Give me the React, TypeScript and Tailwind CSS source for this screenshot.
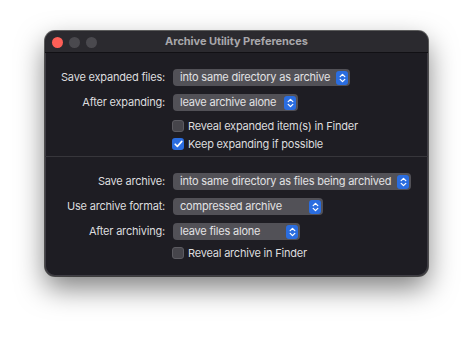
import type { ReactNode } from "react";

const FONT = { fontFamily: "Inter, 'Noto Sans', 'Liberation Sans', sans-serif" };

function Stepper() {
  return (
    <span className="ml-auto mr-[2px] flex h-[14px] w-[12px] items-center justify-center rounded-[3px] bg-[#2a6de0]">
      <svg width="7" height="10" viewBox="0 0 7 10" fill="none">
        <path d="M1.2 3.6 3.5 1.4 5.8 3.6" stroke="#fff" strokeWidth="1.3" strokeLinecap="round" strokeLinejoin="round" />
        <path d="M1.2 6.4 3.5 8.6 5.8 6.4" stroke="#fff" strokeWidth="1.3" strokeLinecap="round" strokeLinejoin="round" />
      </svg>
    </span>
  );
}

function Popup({ label, value, width }: { label: string; value: string; width: string }) {
  return (
    <div className="flex h-[17px] items-center">
      <div className="w-[121px] pr-[1px] text-right text-[#dcdcde]">{label}</div>
      <div className={`ml-[7px] flex h-[17px] items-center rounded-[4px] bg-[#525157] pl-[7px] text-[#e2e2e4] ${width}`}>
        <span className="whitespace-nowrap">{value}</span>
        <Stepper />
      </div>
    </div>
  );
}

function Check({ checked, children }: { checked?: boolean; children: ReactNode }) {
  return (
    <div className="flex h-[18px] items-center pl-[127px]">
      {checked ? (
        <span className="flex h-[12px] w-[12px] items-center justify-center rounded-[3px] bg-[#2a6de0]">
          <svg width="9" height="8" viewBox="0 0 9 8" fill="none">
            <path d="M1.2 4.2 3.4 6.4 7.8 1.4" stroke="#fff" strokeWidth="1.6" strokeLinecap="round" strokeLinejoin="round" />
          </svg>
        </span>
      ) : (
        <span className="h-[12px] w-[12px] rounded-[3px] border border-[#5c5b61] bg-[#46454b]" />
      )}
      <span className="ml-[4px] whitespace-nowrap text-[#dcdcde]">{children}</span>
    </div>
  );
}

export default function App() {
  return (
    <div className="h-[338px] w-[474px] overflow-hidden bg-white pl-[45px] pt-[31px]" style={FONT}>
      <div className="flex h-[245px] w-[383px] flex-col overflow-hidden rounded-[10px] bg-[#1e1d23] text-[11px] tracking-[-0.2px] shadow-[0_12px_28px_rgba(0,0,0,0.5),0_0_0_1px_rgba(0,0,0,0.6)] ring-1 ring-inset ring-[#55545a]/60">
        <header className="relative flex h-[22px] shrink-0 items-center justify-center border-b border-[#111014] bg-[#2b2a2f]">
          <div className="absolute left-[7px] top-[6px] flex gap-[6px]">
            <span className="h-[11px] w-[11px] rounded-full bg-[#fe5f57]" />
            <span className="h-[11px] w-[11px] rounded-full bg-[#4a494e]" />
            <span className="h-[11px] w-[11px] rounded-full bg-[#4a494e]" />
          </div>
          <span className="text-[11px] font-bold tracking-[-0.05px] text-[#a8a7ab]">Archive Utility Preferences</span>
        </header>

        <section className="flex flex-col pt-[16px]">
          <Popup label="Save expanded files:" value="into same directory as archive" width="w-[177px]" />
          <div className="h-[8px]" />
          <Popup label="After expanding:" value="leave archive alone" width="w-[125px]" />
          <div className="h-[6px]" />
          <Check>Reveal expanded item(s) in Finder</Check>
          <Check checked>Keep expanding if possible</Check>
          <div className="mt-[3px] h-px bg-[#37363b]" />
          <div className="h-[16px]" />
          <Popup label="Save archive:" value="into same directory as files being archived" width="w-[238px]" />
          <div className="h-[8px]" />
          <Popup label="Use archive format:" value="compressed archive" width="w-[150px]" />
          <div className="h-[8px]" />
          <Popup label="After archiving:" value="leave files alone" width="w-[127px]" />
          <div className="h-[4px]" />
          <Check>Reveal archive in Finder</Check>
        </section>
      </div>
    </div>
  );
}
